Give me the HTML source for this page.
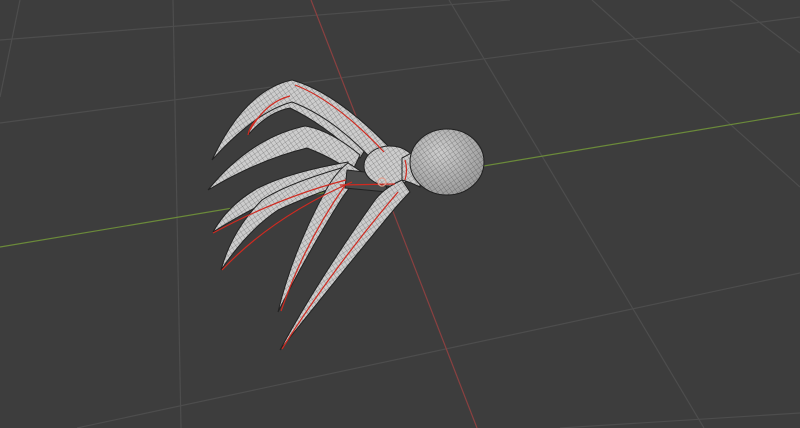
<!DOCTYPE html>
<html><head><meta charset="utf-8"><style>
html,body{margin:0;padding:0;background:#3d3d3d;overflow:hidden}
svg{display:block}
</style></head><body>
<svg width="800" height="428" viewBox="0 0 800 428" xmlns="http://www.w3.org/2000/svg">
<defs>
<pattern id="m" width="4" height="4" patternUnits="userSpaceOnUse" patternTransform="rotate(-35)">
<rect width="4" height="4" fill="#cdcdcd"/>
<path d="M0 0H4M0 0V4" stroke="#6a6a6a" stroke-width="0.6"/>
</pattern>
<radialGradient id="hg" cx="0.4" cy="0.35" r="0.7">
<stop offset="0" stop-color="#000" stop-opacity="0"/>
<stop offset="1" stop-color="#000" stop-opacity="0.25"/>
</radialGradient>
</defs>
<rect width="800" height="428" fill="#3d3d3d"/>
<g stroke="#4d4d4d" stroke-width="1.2" fill="none">
<line x1="0" y1="40" x2="510" y2="0"/>
<line x1="0" y1="123" x2="800" y2="17"/>
<line x1="77" y1="428" x2="800" y2="273"/>
<line x1="560" y1="428" x2="800" y2="413"/>
<line x1="20" y1="0" x2="0" y2="97"/>
<line x1="173" y1="0" x2="181" y2="428"/>
<line x1="449" y1="0" x2="704" y2="428"/>
<line x1="592" y1="0" x2="800" y2="187"/>
<line x1="730" y1="0" x2="800" y2="53"/>
</g>
<line x1="0" y1="247" x2="800" y2="113" stroke="#6b8a3a" stroke-width="1.2"/>
<line x1="311" y1="0" x2="477" y2="428" stroke="#8a4040" stroke-width="1.2"/>
<g fill="url(#m)" stroke="#222" stroke-width="1">
<path d="M368,145 Q320,95 285,88 Q262,98 248,135 Q268,112 290,108 Q325,125 360,158 Z"/>
<path d="M388,146 Q335,92 292,80 Q245,90 212,160 Q255,112 292,102 Q335,118 378,166 Z"/>
<path d="M360,155 Q330,130 305,126 Q250,138 208,190 Q258,160 307,148 Q333,158 352,172 Z"/>
<path d="M348,162 Q290,172 258,188 Q228,205 213,232 Q248,210 272,200 Q312,190 348,182 Z"/>
<path d="M352,165 Q290,182 262,200 Q232,230 221,270 Q248,230 278,210 Q322,190 358,180 Z"/>
<path d="M348,163 Q336,172 326,190 Q293,250 278,312 Q308,252 342,198 Q352,184 362,172 Z"/>
<path d="M347,170 L382,174 L388,192 L345,188 Z" fill="#4a4a4a"/>
<ellipse cx="390" cy="166" rx="26" ry="20"/>
<path d="M402,158 Q412,153 420,148 L420,187 Q410,182 402,180 Z"/>
<ellipse cx="447" cy="162" rx="37" ry="33"/>
<ellipse cx="447" cy="162" rx="37" ry="33" fill="url(#hg)" stroke="none"/>
<path d="M402,180 Q384,188 375,200 Q318,280 280,350 Q342,272 392,212 Q400,202 410,192 Z"/>
</g>
<g stroke="#d02a20" stroke-width="1.2" fill="none">
<path d="M384,152 Q335,100 295,85"/>
<path d="M290,96 Q266,102 250,130"/>
<path d="M258,118 Q250,125 248,135"/>
<path d="M346,180 Q280,197 213,233"/>
<path d="M352,182 Q272,217 222,270"/>
<path d="M346,184 Q305,242 281,311"/>
<path d="M398,192 Q330,272 282,349"/>
<path d="M340,185 L395,184"/>
<circle cx="382" cy="182" r="4" stroke="#e0a090"/>
<path d="M405,160 Q408,170 405,180"/>
</g>
</svg>
</body></html>
